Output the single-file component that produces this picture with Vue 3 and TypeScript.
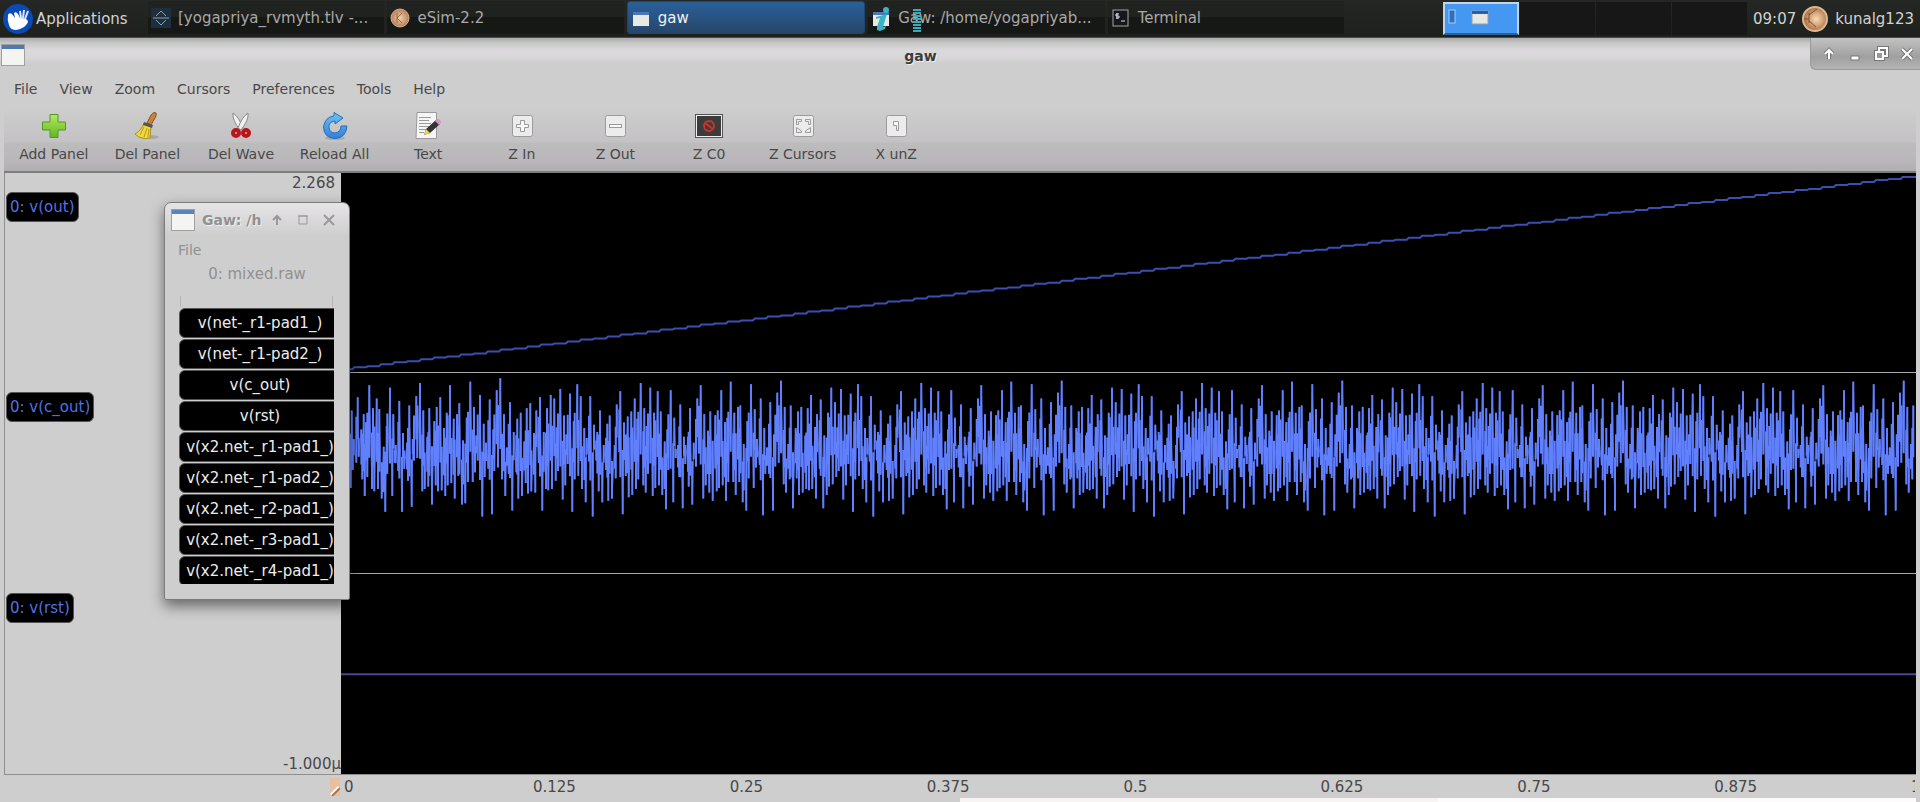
<script setup lang="ts">
const menus: string[] = ['File', 'View', 'Zoom', 'Cursors', 'Preferences', 'Tools', 'Help']

interface Tool { label: string; icon: string }
const tools: Tool[] = [
  { label: 'Add Panel', icon: 'add' },
  { label: 'Del Panel', icon: 'broom' },
  { label: 'Del Wave', icon: 'cut' },
  { label: 'Reload All', icon: 'reload' },
  { label: 'Text', icon: 'text' },
  { label: 'Z In', icon: 'zin' },
  { label: 'Z Out', icon: 'zout' },
  { label: 'Z C0', icon: 'zc0' },
  { label: 'Z Cursors', icon: 'zcur' },
  { label: 'X unZ', icon: 'unz' },
]

interface Task { label: string; icon: string; active?: boolean }
const tasks: Task[] = [
  { label: '[yogapriya_rvmyth.tlv -...', icon: 'editor' },
  { label: 'eSim-2.2', icon: 'coin' },
  { label: 'gaw', icon: 'window', active: true },
  { label: 'Gaw: /home/yogapriyab...', icon: 'info' },
  { label: 'Terminal', icon: 'term' },
]

const signals: string[] = [
  'v(net-_r1-pad1_)', 'v(net-_r1-pad2_)', 'v(c_out)', 'v(rst)',
  'v(x2.net-_r1-pad1_)', 'v(x2.net-_r1-pad2_)', 'v(x2.net-_r2-pad1_)',
  'v(x2.net-_r3-pad1_)', 'v(x2.net-_r4-pad1_)',
]

const ticks: string[] = ['0', '0.125', '0.25', '0.375', '0.5', '0.625', '0.75', '0.875']

const W = 1575

// v(out): DAC staircase rising across the sweep
const rampPath = (() => {
  const steps = 118
  const w = W / steps
  let d = 'M0 197'
  for (let i = 0; i < steps; i++) {
    const y = Math.round(197 - (193 * i) / (steps - 1))
    d += ` L${(i * w).toFixed(1)} ${y} L${((i + 1) * w - 2).toFixed(1)} ${y}`
  }
  return d + ` L${W} 4`
})()

// v(c_out): local maxima and minima as "x,y" samples in thirds of a pixel
const highs = '35,155 41,241 53,115 64,212 71,166 78,190 88,79 99,148 110,119 118,151 131,264 140,202 150,86 160,166 167,259 178,126 189,223 201,252 208,140 218,241 229,112 240,72 250,155 262,234 268,148 283,187 290,144 301,115 312,208 320,162 330,79 341,180 351,166 358,133 369,245 380,177 391,68 402,144 409,230 420,108 431,195 438,252 449,122 460,212 470,94 481,58 492,166 500,266 510,130 521,220 532,180 542,162 553,248 560,148 571,133 582,223 589,155 600,115 611,220 621,148 632,108 643,119 650,206 661,90 672,170 679,227 690,104 701,187 712,76 722,112 733,208 740,238 751,112 762,198 772,220 780,155 791,259 802,195 809,170 824,259 830,137 841,97 852,191 863,173 874,158 884,119 892,180 902,72 913,148 920,202 931,86 942,162 953,97 962,158 974,248 982,212 992,94 1003,177 1014,259 1021,137 1032,234 1044,234 1050,148 1061,252 1072,119 1082,79 1093,166 1104,216 1111,158 1126,169 1133,155 1144,94 1155,190 1162,177 1172,68 1183,162 1194,144 1201,140 1211,256 1222,187 1233,76 1244,151 1251,241 1262,119 1273,208 1281,266 1291,130 1302,227 1312,101 1323,65 1334,144 1345,256 1352,140 1367,208 1374,158 1384,144 1396,230 1403,148 1413,108 1425,205 1431,166 1442,122 1453,230 1464,162 1474,86 1485,130'
const lows = '32,388 38,334 49,312 56,294 67,362 74,412 82,355 96,391 103,398 114,391 125,420 136,460 142,345 157,412 164,312 175,337 186,460 193,330 204,366 215,445 222,305 232,298 247,398 254,391 265,384 276,438 287,380 294,398 305,395 316,412 323,380 334,373 344,420 355,351 366,438 376,434 384,370 398,370 405,341 413,305 427,474 434,355 445,330 456,467 463,337 474,326 486,362 496,412 506,345 517,456 529,341 535,420 546,412 557,373 564,405 574,398 586,402 596,312 607,456 618,391 625,395 636,391 647,366 654,337 668,423 676,380 683,316 697,460 704,362 715,351 726,391 737,431 747,308 758,474 769,305 776,398 787,431 798,334 805,427 816,420 827,359 838,280 848,467 857,352 866,416 877,409 888,391 895,362 910,380 917,402 924,345 938,412 946,388 957,380 967,409 978,452 985,334 1000,431 1007,298 1018,355 1028,449 1036,316 1046,384 1057,438 1068,323 1076,284 1090,420 1097,380 1108,402 1118,427 1130,398 1137,388 1148,380 1158,427 1165,370 1180,370 1187,409 1198,370 1208,431 1219,456 1226,359 1241,388 1248,326 1259,319 1269,470 1276,345 1287,345 1299,456 1306,323 1316,312 1331,377 1338,402 1349,362 1359,449 1370,359 1377,409 1388,402 1399,391 1407,395 1417,391 1428,420 1439,330 1450,449 1460,409 1467,384 1478,377 1489,355'

const PERIOD = 842
const points: [number, number][] = (() => {
  const parse = (s: string) => s.split(' ').map((p) => p.split(',').map(Number) as [number, number])
  const base = [...parse(highs), ...parse(lows)].sort((a, b) => a[0] - b[0])
  const tail = base.filter((p) => p[0] >= 650)
  const all = [...base]
  for (let k = 1; k <= 4; k++) {
    for (const [x, y] of tail) all.push([x + PERIOD * k, y])
  }
  return all
    .map(([x, y]) => [x / 3 - 1, y / 3 - 14] as [number, number])
    .filter((p) => p[0] <= W - 1)
})()

const wavePath = 'M' + points.map((p) => `${p[0].toFixed(1)} ${p[1].toFixed(1)}`).join(' L')
// Each extreme is drawn as a solid bar running most of the way to the next one
const barsPath = points
  .map(([x, y], i) => {
    const next = points[i + 1] ?? points[i - 1]
    return `M${x.toFixed(1)} ${y.toFixed(1)} V${(y + (next[1] - y) * 0.7).toFixed(1)}`
  })
  .join('')
</script>

<template>
  <div class="desktop">
    <header class="taskbar">
      <button class="apps">
        <svg width="32" height="32" viewBox="0 0 32 32" aria-hidden="true">
          <circle cx="16" cy="16" r="15" fill="#0a4ab4" />
          <path d="M6 12 Q7 9 10 11 L13 15 L12 10 Q14 8 16 11 L18 15 Q26 15 26 19 Q24 24 18 26 Q9 29 7 22 Q5 17 6 12Z" fill="#fff" />
          <path d="M18 8 L19 15 M22 7 L21 15 M26 8 L23 16" stroke="#dfe8f8" stroke-width="2" />
        </svg>
        <span>Applications</span>
      </button>
      <nav class="tasks">
        <button v-for="t in tasks" :key="t.label" class="task" :class="{ active: t.active }">
          <svg v-if="t.icon === 'editor'" width="20" height="20" viewBox="0 0 20 20" aria-hidden="true">
            <rect width="20" height="20" fill="#1d2f3f" />
            <path d="M5 8 L10 3 L15 8 M5 12 L10 17 L15 12 M2 10 H18" fill="none" stroke="#8fa3ac" />
          </svg>
          <svg v-else-if="t.icon === 'coin'" width="20" height="20" viewBox="0 0 20 20" aria-hidden="true">
            <defs><radialGradient id="coinS"><stop offset="0" stop-color="#f0d2ae" /><stop offset="1" stop-color="#b67f58" /></radialGradient></defs>
            <circle cx="10" cy="10" r="9" fill="url(#coinS)" stroke="#d9ae88" />
            <path d="M7 5 V15 M12 5 L7 10 L12 15" fill="none" stroke="#96663f" />
          </svg>
          <svg v-else-if="t.icon === 'term'" width="20" height="20" viewBox="0 0 20 20" aria-hidden="true">
            <rect x="2" y="2" width="15" height="16" fill="#15181a" stroke="#a3a3a3" />
            <path d="M8 6 H5 V8 H8 V10 H5 M6 5 V11 M10 13 H14" fill="none" stroke="#ddd" />
          </svg>
          <svg v-else width="20" height="28" viewBox="0 0 20 28" aria-hidden="true">
            <rect x="2" y="8" width="16" height="14" fill="#e8e8e4" />
            <rect x="2" y="8" width="16" height="3" fill="#4a78b5" />
            <g v-if="t.icon === 'info'" fill="#3ab3c4">
              <ellipse cx="15" cy="6" rx="3" ry="3" />
              <path d="M5 13 L16 10 L12 23 L15 22 L14 25 L9 27 L6 26 L6 23 L9 14 L5 15Z" />
            </g>
          </svg>
          <span>{{ t.label }}</span>
          <i v-if="t.icon === 'info'" class="busy"></i>
        </button>
      </nav>
      <div class="pager">
        <button class="ws on" aria-label="Workspace 1">
          <svg width="72" height="29" viewBox="0 0 72 29" aria-hidden="true">
            <rect x="4" y="6" width="6" height="13" fill="#2e6fc0" stroke="#a9cdf5" />
            <rect x="27" y="7" width="16" height="13" fill="#e8e8e2" stroke="#8aa0b8" />
            <rect x="27" y="7" width="16" height="3" fill="#2f5fa5" />
          </svg>
        </button>
        <button class="ws" aria-label="Workspace 2"></button>
        <button class="ws" aria-label="Workspace 3"></button>
        <button class="ws" aria-label="Workspace 4"></button>
      </div>
      <time class="clock">09:07</time>
      <button class="user">
        <svg width="28" height="32" viewBox="0 0 28 32" aria-hidden="true">
          <defs><radialGradient id="coinL" cx="0.55"><stop offset="0" stop-color="#f8dcb8" /><stop offset="0.5" stop-color="#d9a87c" /><stop offset="1" stop-color="#a8714a" /></radialGradient></defs>
          <circle cx="14" cy="16" r="12" fill="url(#coinL)" stroke="#dcb892" stroke-width="2" />
          <path d="M3 16 H8 M8 10 V20 M8 12 L16 6 M8 18 L15 24" fill="none" stroke="#7c5030" />
        </svg>
        <span>kunalg123</span>
      </button>
    </header>

    <main class="window">
      <div class="titlebar">
        <svg class="winicon" width="24" height="22" viewBox="0 0 24 22" aria-hidden="true">
          <rect x="0.5" y="0.5" width="23" height="21" fill="#f4f4f1" stroke="#a0a0a0" />
          <rect x="1" y="1" width="22" height="4" fill="#5079b4" />
        </svg>
        <h1>gaw</h1>
        <div class="controls">
          <button aria-label="Shade"><svg width="18" height="18" viewBox="0 0 18 18"><path d="M9 14 V5 M5 9 L9 5 L13 9" fill="none" stroke="#777" stroke-width="4" /><path d="M9 14 V5 M5 9 L9 5 L13 9" fill="none" stroke="#fff" stroke-width="2" /></svg></button>
          <button aria-label="Minimize"><svg width="18" height="18" viewBox="0 0 18 18"><rect x="5" y="11" width="8" height="4" fill="#fff" stroke="#777" /></svg></button>
          <button aria-label="Restore"><svg width="18" height="18" viewBox="0 0 18 18"><path d="M7 6 V3 H15 V11 H12" fill="none" stroke="#777" stroke-width="4" /><rect x="4" y="7" width="7" height="7" fill="none" stroke="#777" stroke-width="4" /><path d="M7 6 V3 H15 V11 H12" fill="none" stroke="#fff" stroke-width="2" /><rect x="4" y="7" width="7" height="7" fill="#999" stroke="#fff" stroke-width="2" /></svg></button>
          <button aria-label="Close"><svg width="18" height="18" viewBox="0 0 18 18"><path d="M4 4 L14 14 M14 4 L4 14" stroke="#777" stroke-width="4" /><path d="M4 4 L14 14 M14 4 L4 14" stroke="#fff" stroke-width="2" /></svg></button>
        </div>
      </div>

      <nav class="menubar">
        <button v-for="m in menus" :key="m">{{ m }}</button>
      </nav>

      <div class="toolbar">
        <button v-for="t in tools" :key="t.label" class="tool">
          <svg width="28" height="28" viewBox="0 0 28 28" aria-hidden="true">
            <defs>
              <linearGradient id="gGreen" x1="0" y1="0" x2="0" y2="1"><stop offset="0" stop-color="#b4e860" /><stop offset="1" stop-color="#62b820" /></linearGradient>
              <linearGradient id="gBlue" x1="0" y1="0" x2="0" y2="1"><stop offset="0" stop-color="#6cc5f5" /><stop offset="1" stop-color="#2f7fe0" /></linearGradient>
            </defs>
            <path v-if="t.icon === 'add'" d="M10 2.500 H18 V10 H25.500 V18 H18 V25.500 H10 V18 H2.500 V10 H10Z" fill="url(#gGreen)" stroke="#4f9a2a" />
            <g v-else-if="t.icon === 'broom'">
              <ellipse cx="16" cy="25" rx="10" ry="2" fill="#a8a7a8" />
              <path d="M14 11 L18 3 Q21 -1 23 1 Q24 3 22 6 L18 13Z" fill="#c8823a" stroke="#8a5420" />
              <path d="M11 11 L18 14 L17 26 Q8 28 2 22 Q9 18 11 11Z" fill="#f1d93c" stroke="#a88f1c" />
              <path d="M11 10 L20 13 L19 16 L10 13Z" fill="#555" />
              <path d="M11 15 L7 23 M14 16 L11 25 M16 17 L15 25" stroke="#b59b20" />
            </g>
            <g v-else-if="t.icon === 'cut'">
              <path d="M6 1 Q5 8 13 18 L16 16 Q12 5 6 1Z" fill="#f0f0f0" stroke="#888" />
              <path d="M21 1 Q22 8 14 18 L11 16 Q15 5 21 1Z" fill="#f0f0f0" stroke="#888" />
              <circle cx="9" cy="21" r="3" fill="#d9b0b0" stroke="#b8161c" stroke-width="4" />
              <circle cx="19" cy="21" r="3" fill="#d9b0b0" stroke="#b8161c" stroke-width="4" />
            </g>
            <g v-else-if="t.icon === 'reload'">
              <ellipse cx="14" cy="26" rx="10" ry="2" fill="#aaa9aa" />
              <path d="M13 4 V0.500 L22 6 L14 12 V9 Q7 10 8 16 Q9 21 14 21 Q20 20 20 14 H26 Q25 26 14 26.500 Q3 26 2.500 15 Q4 5 13 4Z" fill="url(#gBlue)" stroke="#2b6cb4" />
            </g>
            <g v-else-if="t.icon === 'text'">
              <path d="M3 0.500 H22.500 V26.500 H2Z" fill="#f5f5f5" stroke="#9a9a9a" />
              <path d="M5 5.500 H17 M5 8.500 H15 M5 11.500 H17 M5 14.500 H15 M5 17.500 H13 M5 20.500 H10" stroke="#9a9a9a" />
              <path d="M10 23 L12 17 L22 8 L26 12 L16 21Z" fill="#333" />
              <path d="M10 23 L12 17 L16 21Z" fill="#ecd64c" />
              <path d="M21 9 L23 7 Q27 7 27 11 L25 13Z" fill="#dc8fc0" />
            </g>
            <g v-else-if="t.icon === 'zc0'">
              <rect x="0.500" y="2.500" width="27" height="23" fill="#eee" stroke="#555" />
              <rect x="2" y="4" width="24" height="20" fill="#3c3c3c" />
              <circle cx="14" cy="14" r="5" fill="none" stroke="#c8352b" stroke-width="2" />
              <path d="M10 11 L18 17" stroke="#c8352b" stroke-width="2" />
            </g>
            <g v-else fill="none" stroke="#9b9b9b">
              <rect x="4.500" y="3.500" width="20" height="21" rx="2" fill="#ececec" />
              <path v-if="t.icon === 'zin'" d="M12.500 8.500 H16.500 V12.500 H20.500 V15.500 H16.500 V19.500 H12.500 V15.500 H8.500 V12.500 H12.500Z" fill="#f8f8f8" />
              <rect v-else-if="t.icon === 'zout'" x="8.500" y="12.500" width="12" height="3" fill="#f8f8f8" />
              <path v-else-if="t.icon === 'zcur'" d="M12.500 7.500 H7.500 V12.500 H9.500 V9.500 H12.500Z M16.500 7.500 H21.500 V12.500 H19.500 V9.500 H16.500Z M12.500 20.500 H7.500 V15.500 L12.500 19Z M16.500 20.500 H21.500 V15.500 L16.500 19Z" />
              <path v-else d="M11.500 9.500 H16.500 V18.500 H14.500 V13.500 H11.500Z" fill="#f8f8f8" />
            </g>
          </svg>
          <span>{{ t.label }}</span>
        </button>
      </div>

      <section class="chart">
        <div class="panel">
          <div class="side">
            <span class="ymax">2.268</span>
            <button class="tag">0: v(out)</button>
          </div>
          <div class="plot">
            <svg viewBox="0 0 1575 200" preserveAspectRatio="none"><path class="ramp" :d="rampPath" /></svg>
          </div>
        </div>
        <div class="panel">
          <div class="side"><button class="tag">0: v(c_out)</button></div>
          <div class="plot">
            <svg viewBox="0 0 1575 200" preserveAspectRatio="none">
              <path class="wave" :d="wavePath" />
              <path class="bars" :d="barsPath" />
            </svg>
          </div>
        </div>
        <div class="panel">
          <div class="side">
            <button class="tag">0: v(rst)</button>
            <span class="ymin">-1.000µ</span>
          </div>
          <div class="plot">
            <svg viewBox="0 0 1575 200" preserveAspectRatio="none"><path class="flat" d="M0 100 H1575" /></svg>
          </div>
        </div>
      </section>

      <footer class="axis">
        <div class="corner">
          <svg width="10" height="18" viewBox="0 0 10 18" aria-hidden="true">
            <rect width="10" height="18" fill="#e6c0a0" />
            <path d="M1 17 L9 9" stroke="#fff" stroke-width="3" /><path d="M2 18 L10 10" stroke="#a8744a" stroke-width="2" />
          </svg>
        </div>
        <div class="ticks">
          <span v-for="t in ticks" :key="t">{{ t }}</span>
          <span class="last">1</span>
        </div>
      </footer>
      <div class="strip"></div>
    </main>

    <aside class="dialog">
      <div class="dtitle">
        <svg width="24" height="22" viewBox="0 0 24 22" aria-hidden="true">
          <rect x="0.5" y="0.5" width="23" height="21" fill="#f4f4f1" stroke="#a0a0a0" />
          <rect x="1" y="1" width="22" height="4" fill="#5a84bc" />
        </svg>
        <h2>Gaw: /h</h2>
        <button aria-label="Shade"><svg width="16" height="16" viewBox="0 0 16 16"><path d="M8 13 V4 M4 8 L8 4 L12 8" fill="none" stroke="#999" stroke-width="2" /></svg></button>
        <button aria-label="Maximize"><svg width="16" height="16" viewBox="0 0 16 16"><path d="M4 4 H12 V12 H4Z M3 4 H13" fill="none" stroke="#999" /></svg></button>
        <button aria-label="Close"><svg width="16" height="16" viewBox="0 0 16 16"><path d="M3 3 L13 13 M13 3 L3 13" stroke="#999" stroke-width="2" /></svg></button>
      </div>
      <button class="dmenu">File</button>
      <p class="dname">0: mixed.raw</p>
      <div class="list">
        <button v-for="s in signals" :key="s">{{ s }}</button>
      </div>
    </aside>
  </div>
</template>

<style>
body { margin: 0; background: #cecece; }
</style>

<style scoped>
.desktop {
  position: relative;
  display: flex;
  flex-direction: column;
  height: 100vh;
  overflow: hidden;
  background: #cecece;
  color: #484848;
  font: 14px/20px "DejaVu Sans", sans-serif;
}
button {
  margin: 0;
  padding: 0;
  border: 0;
  background: none;
  color: inherit;
  font: inherit;
  white-space: nowrap;
}
svg { display: block; flex: none; }

.taskbar {
  display: flex;
  align-items: center;
  height: 38px;
  flex: none;
  background: linear-gradient(#242723, #1d201d);
  border-bottom: 1px solid #4c4c4c;
  color: #d2d2d2;
  font-size: 15px;
  box-sizing: border-box;
}
.apps { display: flex; align-items: center; gap: 2px; width: 146px; padding-left: 2px; box-sizing: border-box; }
.tasks { display: flex; gap: 3px; flex: 0 1 1196px; min-width: 0; padding: 0 0 2px 2px; }
.task {
  position: relative;
  display: flex;
  align-items: center;
  gap: 7px;
  flex: 1 1 0;
  min-width: 0;
  height: 33px;
  padding-left: 3px;
  background: linear-gradient(#20221f 50%, #161816 50%);
  color: #a8a8a8;
}
.task.active {
  background: linear-gradient(#2a6099, #27466a);
  border: 1px solid #1d4674;
  border-radius: 3px;
  color: #f0f0f0;
  box-sizing: border-box;
}
.busy {
  position: absolute;
  left: 45px;
  top: 8px;
  width: 8px;
  height: 24px;
  background: repeating-linear-gradient(#3ba9b8 0 2px, transparent 2px 3px);
}
.pager { display: flex; gap: 1px; margin-left: auto; }
.ws { width: 75px; height: 33px; background: #171717; }
.ws.on { width: 76px; background: #4498f2; border: 2px solid #c4d4e4; border-bottom-color: #2d618f; box-sizing: border-box; }
.clock { margin-left: 6px; }
.user { display: flex; align-items: center; gap: 6px; margin: 0 6px 0 5px; }

.window { display: flex; flex-direction: column; flex: 1; min-height: 0; }
.titlebar {
  display: flex;
  justify-content: space-between;
  height: 34px;
  flex: none;
  background: linear-gradient(#aaa, #c8c7c8 5px, #dbd9db 12px, #d8d7d8 20px, #cecece 25px);
}
.winicon { margin: 6px 0 0 1px; }
h1 { flex: 1; margin: 0; padding: 8px 0 0 6px; text-align: center; font-size: 14px; line-height: 20px; color: #3c3c3c; text-shadow: 1px 1px #eee; }
.controls {
  display: flex;
  align-items: center;
  justify-content: space-between;
  width: 110px;
  height: 32px;
  padding: 0 4px 0 9px;
  box-sizing: border-box;
  border-left: 1px solid #999;
  border-bottom: 1px solid #999;
  border-radius: 0 0 0 6px;
  background: linear-gradient(#c2c2c2, #a0a0a0 60%, #b5b3b5);
}
.menubar { display: flex; gap: 22px; padding: 7px 14px 11px; flex: none; }
.toolbar {
  flex: none;
  display: grid;
  grid-template-columns: repeat(10, minmax(0, 1fr));
  height: 61px;
  margin: 0 4px;
  padding: 0 calc(100% - 947px) 0 3px;
  border-bottom: 2px solid #7d7d7d;
  background: linear-gradient(#cecece, #cac9ca 10px, #c4c2c4 32px, #bdbcbd 33px, #b9b7b9 50px, #b0afb0);
}
.tool { display: flex; flex-direction: column; align-items: center; gap: 4px; padding-top: 2px; }

.chart {
  flex: 1;
  min-height: 0;
  display: flex;
  flex-direction: column;
  margin: 0 4px;
  border: 1px solid #8f8f8f;
  border-top: 0;
  border-right: 0;
}
.panel { display: flex; flex: 1; min-height: 0; }
.side { position: relative; display: flex; flex-direction: column; align-items: flex-start; width: 336px; flex: none; padding-top: 19px; box-sizing: border-box; font-size: 15px; }
.tag {
  height: 30px;
  margin-left: 1px;
  padding: 0 3px;
  border: 1px solid #555;
  border-radius: 6px;
  background: #000;
  color: #5470e0;
}
.ymax { position: absolute; top: 0; right: 6px; }
.ymin { margin: auto 0 0 auto; }
.plot { flex: 1; min-width: 0; background: #000; border-bottom: 1px solid #a8a8a8; }
.panel:last-child .plot { border-bottom: 0; }
.plot svg { width: 100%; height: 100%; }
.plot path { fill: none; vector-effect: non-scaling-stroke; }
.ramp { stroke: #3a50b0; stroke-width: 2px; }
.wave { stroke: #4c64cc; stroke-width: 1px; }
.bars { stroke: #6080ff; stroke-width: 2px; }
.flat { stroke: #4a4690; stroke-width: 2px; }

.axis { display: flex; height: 23px; flex: none; padding-right: 5px; overflow: hidden; font-size: 15px; }
.corner { width: 340px; flex: none; padding-top: 3px; box-sizing: border-box; }
.corner svg { margin-left: auto; }
.ticks { display: flex; flex: 1; margin-left: -4px; padding-top: 2px; overflow: hidden; }
.ticks span { flex: 1 1 0; min-width: 0; }
.ticks span:first-child { text-indent: 8px; }
.ticks .last { flex: 0 0 4px; overflow: hidden; }
.strip { flex: none; height: 4px; margin: 0 4px 0 50%; background: linear-gradient(90deg, #f8f4f4 50%, #fdfbfb 50%); }

.dialog {
  position: absolute;
  left: 164px;
  top: 202px;
  width: 186px;
  height: 398px;
  box-sizing: border-box;
  border: 1px solid #7c7c7c;
  border-radius: 7px 7px 2px 2px;
  background: linear-gradient(#e6e4e6, #d4d3d4 26px, #cecece 32px);
  box-shadow: 0 6px 14px rgba(0, 0, 0, 0.5);
  color: #919191;
  display: flex;
  flex-direction: column;
}
.dtitle { display: flex; align-items: center; padding: 5px 12px 0 6px; height: 24px; }
.dtitle h2 { margin: 0 4px 0 7px; width: 63px; flex: none; white-space: nowrap; font-size: 14px; line-height: 20px; text-shadow: 1px 1px #eee; }
.dtitle button + button { margin-left: 10px; }
.dmenu { align-self: flex-start; margin: 8px 0 0 13px; }
.dname { margin: 4px 0 0; text-align: center; font-size: 15px; }
.list {
  display: flex;
  flex-direction: column;
  gap: 1px;
  width: 155px;
  height: 288px;
  margin: 12px 0 0 14px;
  overflow: hidden;
  font-size: 15px;
}
.list::before {
  content: "";
  flex: none;
  height: 11px;
  margin: 0 1px;
  border: solid #b4b4b4;
  border-width: 0 1px;
}
.list button {
  flex: none;
  width: 162px;
  height: 30px;
  border: 1px solid #555;
  border-radius: 6px;
  background: #000;
  color: #ededed;
}
</style>
